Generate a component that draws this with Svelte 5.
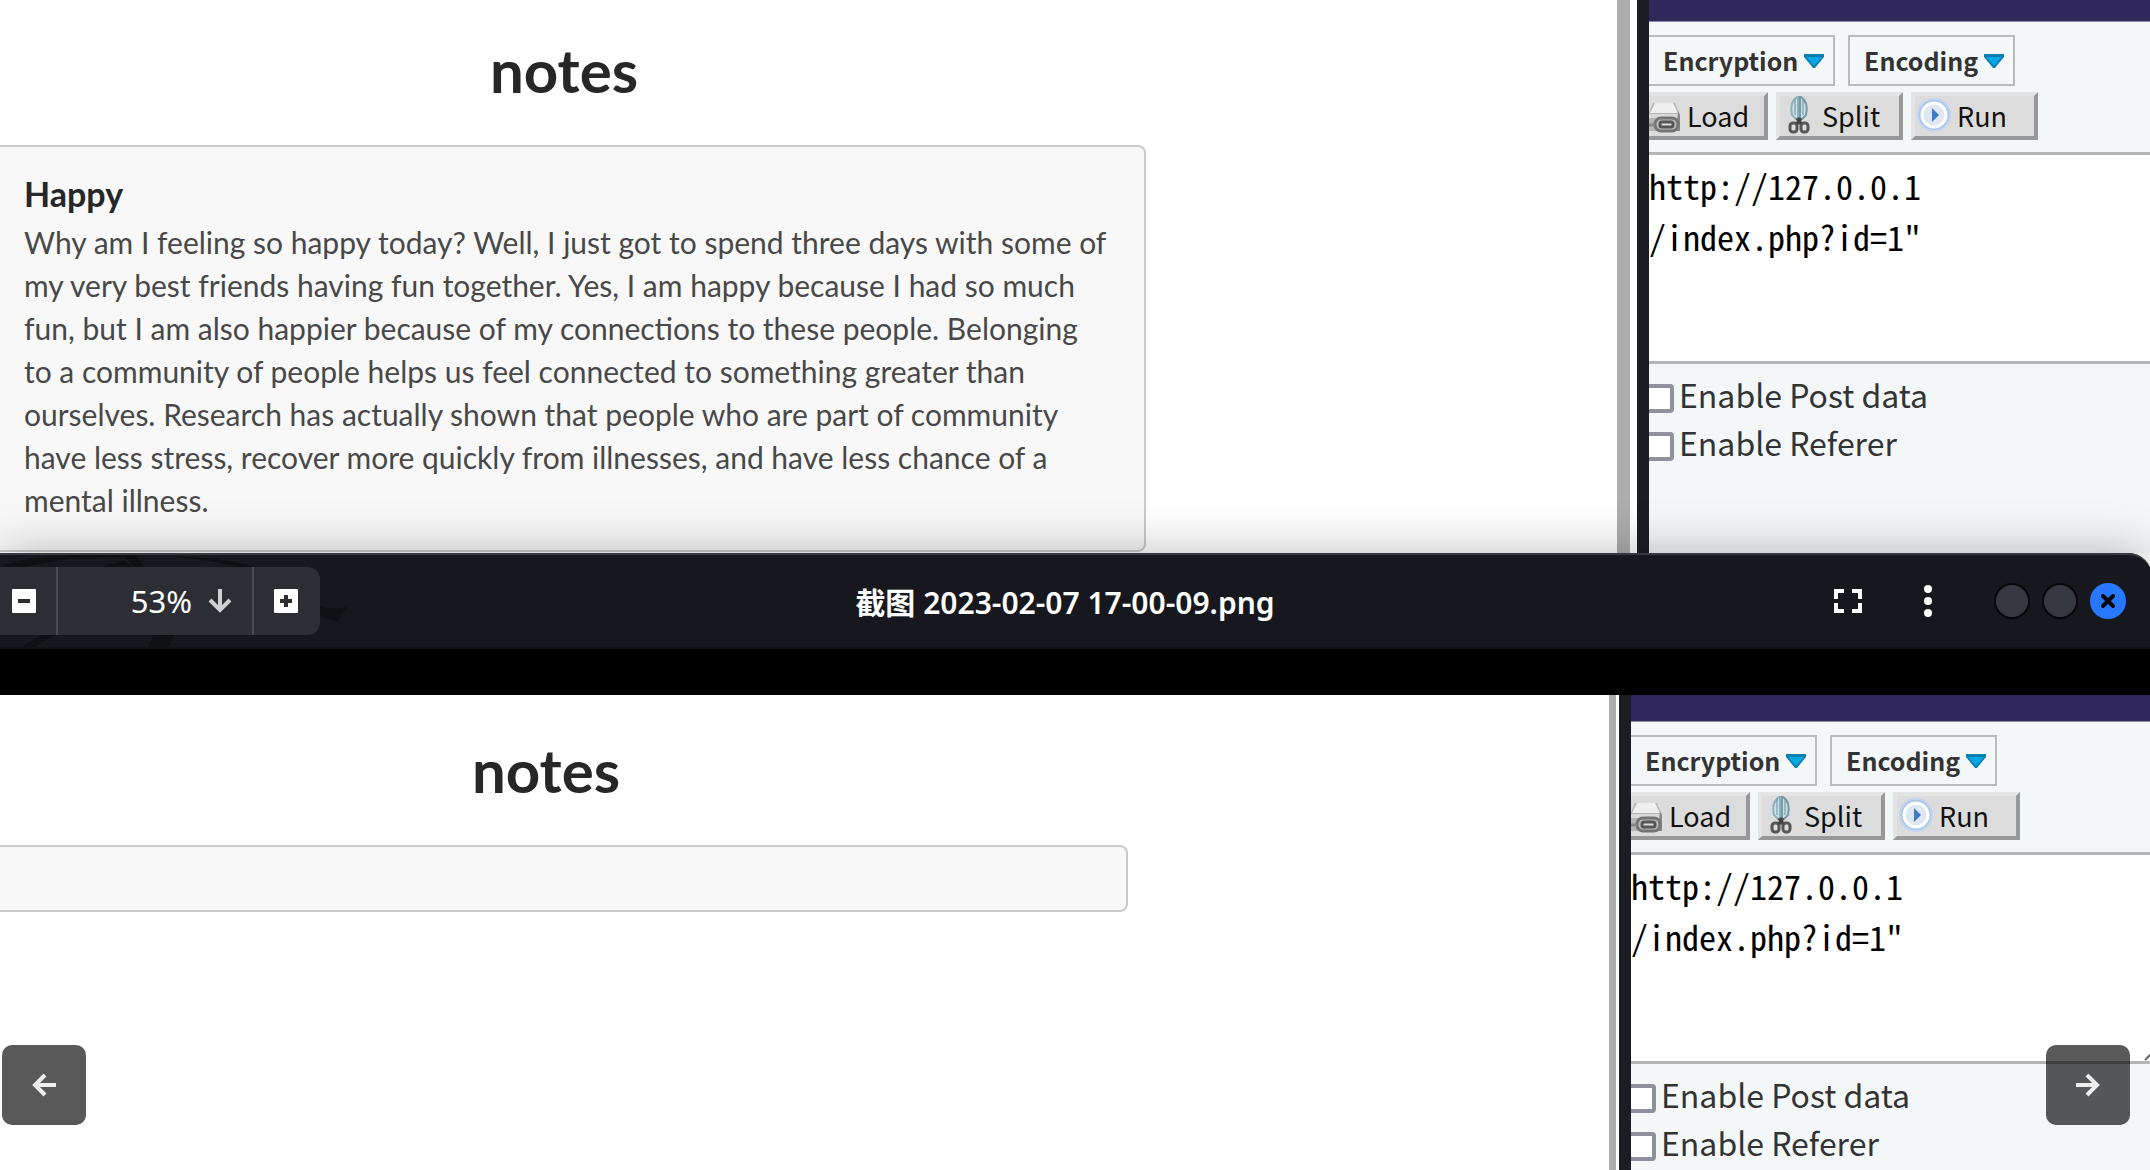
<script lang="ts">
	const title = '截图 2023-02-07 17-00-09.png';
	const windows = [
		{
			id: 'front',
			note: {
				header: 'Happy',
				text: 'Why am I feeling so happy today? Well, I just got to spend three days with some of my very best friends having fun together. Yes, I am happy because I had so much fun, but I am also happier because of my connections to these people. Belonging to a community of people helps us feel connected to something greater than ourselves. Research has actually shown that people who are part of community have less stress, recover more quickly from illnesses, and have less chance of a mental illness.'
			},
			url: 'http://127.0.0.1\n/index.php?id=1"'
		},
		{
			id: 'image',
			note: null,
			url: 'http://127.0.0.1\n/index.php?id=1"'
		}
	];
	const menus = ['Encryption', 'Encoding'];
	const options = ['Enable Post data', 'Enable Referer'];
</script>

{#snippet browser(win: (typeof windows)[number])}
	<div class="window {win.id}">
		<main>
			<h1>notes</h1>
			<div class="message">
				{#if win.note}
					<h2>{win.note.header}</h2>
					<p>{win.note.text}</p>
				{/if}
			</div>
		</main>
		<div class="scrollbar"></div>
		<aside>
			<div class="titlebar"></div>
			<div class="menus">
				{#each menus as menu}
					<div class="menu">
						<select aria-label={menu}>
							<option>{menu}</option>
						</select>
						<svg width="22" height="16" viewBox="0 0 22 16">
							<path d="M1 1h20v3L12 15h-2L1 4z" fill="#0d7fae" />
							<path d="M3 4h16l-8 9z" fill="#06a5e3" />
						</svg>
					</div>
				{/each}
			</div>
			<div class="actions">
				<button>
					<svg width="34" height="38" viewBox="0 0 34 38">
						<path d="M6 7h22l5 12v16H1V19z" fill="#b4b4b4" />
						<path d="M8 7h18l5 10H3z" fill="#efefef" />
						<path d="M2 18h29v4H2z" fill="#dadada" />
						<path d="M31 15l2 4v16h-4z" fill="#868686" />
						<rect x="8" y="22" width="23" height="13" rx="6" fill="#bbb" stroke="#747474" stroke-width="3" />
						<rect x="13" y="26" width="13" height="5" rx="2" fill="#ddd" stroke="#555" stroke-width="3" />
						<path d="M0 29h8" stroke="#888" stroke-width="3" />
					</svg>
					Load
				</button>
				<button>
					<svg width="34" height="38" viewBox="0 0 34 38">
						<path d="M15 1c-5 3-7 10-5 18l4 4h2V1z" fill="#c9e3ea" stroke="#8db0ba" stroke-width="2" />
						<path d="M19 1c5 3 7 10 5 18l-4 4h-2V1z" fill="#c9e3ea" stroke="#7699a4" stroke-width="2" />
						<path d="M13 3v16M21 3v16" stroke="#6c8d98" />
						<path d="M15 22l2 4 2-4" fill="none" stroke="#555" stroke-width="3" />
						<rect x="8" y="27" width="7" height="9" rx="3" fill="#ddd" stroke="#555" stroke-width="3" />
						<rect x="19" y="27" width="7" height="9" rx="3" fill="#ddd" stroke="#555" stroke-width="3" />
						<path d="M15 28l2-4 2 4" fill="none" stroke="#444" stroke-width="3" />
					</svg>
					Split
				</button>
				<button>
					<svg width="34" height="38" viewBox="0 0 34 38">
						<circle cx="17" cy="19" r="16" fill="#a9c4e8" stroke="#c3d5ee" stroke-width="2" />
						<circle cx="17" cy="19" r="12" fill="#dfe7f3" stroke="#fff" stroke-width="3" />
						<path d="M15 12l7 7-7 7z" fill="#3f7ac4" />
					</svg>
					Run
				</button>
			</div>
			<div class="url">
				<textarea aria-label="URL" rows="4" spellcheck="false" value={win.url}></textarea>
				<svg class="grip" width="14" height="14" viewBox="0 0 14 14">
					<path d="M1 13L13 1M7 13l6-6" stroke="#666" stroke-width="2" />
				</svg>
			</div>
			<div class="options">
				{#each options as option}
					<label>
						<input type="checkbox" />
						<span>{option}</span>
					</label>
				{/each}
			</div>
		</aside>
	</div>
{/snippet}

<div class="desktop">
	{@render browser(windows[0])}

	<section class="viewer">
		<header>
			<!-- watermark behind the toolbar -->
			<svg class="dragon" width="360" height="94" viewBox="0 0 360 94">
				<path d="M0 10Q50-4 135 0l9 12h-12l-7-9Q60 0 0 18z" />
				<path d="M100 12l23-6 8 6zM174 2q50 0 86 11h-20Q210 4 174 2zM320 51q15 6 31 2l-10 16q-10-5-21-7z" />
				<path d="M19 94l24-16h14L32 94zM148 94l6-16h22l-8 16z" />
			</svg>
			<div class="zoom">
				<button aria-label="Zoom out">
					<svg width="24" height="24" viewBox="0 0 24 24">
						<rect width="24" height="24" rx="1" fill="#fff" />
						<path d="M6 12h12" stroke="#2d2e33" stroke-width="4" />
					</svg>
				</button>
				<button class="level">
					53%
					<svg width="24" height="24" viewBox="0 0 24 24">
						<path d="M12 0v21M2 11l10 10 10-10" fill="none" stroke="#d0d1d2" stroke-width="4" />
					</svg>
				</button>
				<button aria-label="Zoom in">
					<svg width="24" height="24" viewBox="0 0 24 24">
						<rect width="24" height="24" rx="1" fill="#fff" />
						<path d="M6 12h12M12 6v12" stroke="#2d2e33" stroke-width="4" />
					</svg>
				</button>
			</div>
			<h3>{title}</h3>
			<div class="tools">
				<button aria-label="Fullscreen">
					<svg width="28" height="24" viewBox="0 0 28 24">
						<path d="M2 10V2h8M18 2h8v8M26 14v8h-8M10 22H2v-8" fill="none" stroke="#fff" stroke-width="4" />
					</svg>
				</button>
				<button aria-label="Menu">
					<svg width="8" height="32" viewBox="0 0 8 32" fill="#fff">
						<circle cx="4" cy="4" r="4" />
						<circle cx="4" cy="16" r="4" />
						<circle cx="4" cy="28" r="4" />
					</svg>
				</button>
				<div class="controls">
					<button class="control" aria-label="Minimize"></button>
					<button class="control" aria-label="Maximize"></button>
					<button class="control close" aria-label="Close">
						<svg width="14" height="14" viewBox="0 0 14 14">
							<path d="M2 2l10 10M12 2L2 12" stroke="#0a0a0c" stroke-width="4" stroke-linecap="round" />
						</svg>
					</button>
				</div>
			</div>
		</header>
		<div class="picture">
			{@render browser(windows[1])}
			<button class="nav previous" aria-label="Previous">
				<svg width="24" height="24" viewBox="0 0 24 24">
					<path d="M24 12H3M13 2L3 12l10 10" fill="none" stroke="#eee" stroke-width="4" />
				</svg>
			</button>
			<button class="nav next" aria-label="Next">
				<svg width="24" height="24" viewBox="0 0 24 24">
					<path d="M0 12h21M11 2l10 10-10 10" fill="none" stroke="#eee" stroke-width="4" />
				</svg>
			</button>
		</div>
	</section>
</div>

<style>
	:global(body) {
		margin: 0;
		overflow: hidden;
	}

	* {
		box-sizing: border-box;
	}

	svg {
		display: block;
		flex: none;
	}

	button {
		border: none;
		padding: 0;
		margin: 0;
		background: transparent;
		cursor: pointer;
	}

	.desktop {
		display: flex;
		flex-direction: column;
		height: 100vh;
		overflow: hidden;
		background: white;
	}

	.window {
		display: flex;
		background: white;
	}

	main {
		flex: 1;
		min-width: 0;
		color: #272727;
		font-family: Lato, sans-serif;
	}

	h1 {
		width: 1164px;
		margin: 0 0 0 -18px;
		padding: 32px 0 37px;
		font-size: 60px;
		line-height: 76px;
		text-align: center;
	}

	.message {
		width: 1164px;
		min-height: 67px;
		margin: 0 0 1px -18px;
		padding: 26px 36px 28px 40px;
		border: 2px solid #c9cacb;
		border-radius: 8px;
		background: #f8f8f9;
	}

	h2 {
		margin: 0 0 6px;
		font-size: 34px;
		line-height: 42px;
	}

	p {
		margin: 0;
		color: #484848;
		font-size: 30px;
		line-height: 43px;
	}

	.scrollbar {
		flex: none;
		width: 20px;
		border-right: 7px solid white;
		background: #adadad;
	}

	aside {
		flex: none;
		width: 513px;
		overflow: hidden;
		border-left: 12px solid #1c1d22;
		background: #f3f7f8;
		color: #333;
		font-family: 'Noto Sans CJK SC', sans-serif;
	}

	.titlebar {
		height: 22px;
		border-bottom: 1px solid #8d88ae;
		background: #30285b;
	}

	.menus {
		display: flex;
		gap: 13px;
		margin: 13px 0 6px -2px;
	}

	.menu {
		display: flex;
		align-items: center;
		gap: 4px;
		height: 51px;
		padding: 0 8px 0 14px;
		border: 2px solid #bbb;
	}

	select {
		appearance: none;
		border: none;
		padding: 0 0 2px;
		background: transparent;
		color: #333;
		font: bold 25px 'Noto Sans CJK SC', sans-serif;
	}

	.actions {
		display: flex;
		gap: 8px;
		margin: 0 0 12px -8px;
	}

	.actions button {
		display: flex;
		align-items: center;
		gap: 6px;
		width: 127px;
		height: 48px;
		border: 4px solid;
		border-color: #e4e4e4 #989898 #989898 #e4e4e4;
		padding: 0 0 2px 2px;
		background: #dcdcdc;
		color: #111;
		font: 27px 'Noto Sans CJK SC', sans-serif;
	}

	.url {
		position: relative;
		width: 527px;
		border-top: 3px solid #b5b5b5;
		border-bottom: 3px solid #b5b5b5;
	}

	textarea {
		display: block;
		width: 100%;
		height: 206px;
		border: none;
		padding: 5px 0 0;
		background: white;
		color: black;
		font-family: 'Noto Sans Mono CJK SC', 'Noto Sans CJK SC', monospace;
		font-feature-settings: 'hwid';
		font-size: 34px;
		line-height: 51px;
		resize: none;
		outline: none;
		overflow: hidden;
	}

	.grip {
		position: absolute;
		right: 0;
		bottom: 0;
	}

	.options {
		padding-top: 10px;
	}

	label {
		display: flex;
		align-items: center;
		gap: 5px;
		height: 48px;
		font-size: 32px;
		line-height: 40px;
	}

	label span {
		padding-bottom: 8px;
	}

	input {
		appearance: none;
		flex: none;
		width: 29px;
		height: 29px;
		margin: 0 0 0 -4px;
		border: 4px solid #8f8f9d;
		border-radius: 4px;
		background: white;
	}

	.viewer {
		position: relative;
		display: flex;
		flex: 1;
		flex-direction: column;
		min-height: 0;
		margin-right: -2px;
		border-radius: 0 24px 0 0;
		background: black;
		box-shadow: 0 0 50px rgba(0, 0, 0, 0.27);
	}

	header {
		position: relative;
		display: grid;
		grid-template-columns: 1fr auto 1fr;
		align-items: center;
		height: 96px;
		border-top: 2px solid #38393e;
		border-bottom: 2px solid #111216;
		border-radius: 0 24px 0 0;
		background: #17181d;
	}

	.dragon {
		position: absolute;
		left: 0;
		top: 0;
		height: 92px;
		fill: #0f1013;
	}

	.zoom {
		position: relative;
		display: flex;
		justify-self: start;
		height: 68px;
		overflow: hidden;
		border-radius: 0 12px 12px 0;
		background: #2d2e33;
	}

	.zoom button {
		display: flex;
		align-items: center;
		padding: 0 20px;
	}

	.zoom button:first-child {
		padding-left: 12px;
	}

	.zoom button:last-child {
		padding-right: 22px;
	}

	.zoom .level {
		gap: 16px;
		justify-content: flex-end;
		width: 198px;
		border: solid #4b4c50;
		border-width: 0 2px;
		color: white;
		font: 31px 'Noto Sans', sans-serif;
	}

	h3 {
		margin: 0 22px 0 0;
		color: white;
		font: 600 30px 'Noto Sans', 'Noto Sans CJK SC', sans-serif;
	}

	.tools {
		display: flex;
		align-items: center;
		justify-self: end;
		gap: 62px;
		padding-right: 26px;
	}

	.controls {
		display: flex;
		gap: 12px;
	}

	.control {
		display: flex;
		align-items: center;
		justify-content: center;
		width: 36px;
		height: 36px;
		border: 2px solid #08080a;
		border-radius: 50%;
		background: #363741;
	}

	.close {
		border-color: #2777ff;
		background: #2777ff;
	}

	.picture {
		position: relative;
		flex: 1;
		min-height: 0;
		margin-right: 2px;
		padding-top: 46px;
		overflow: hidden;
	}

	.image {
		height: 100%;
		margin-left: -18px;
	}

	.image h1 {
		padding-top: 37px;
	}

	.image .titlebar {
		height: 27px;
	}

	.image .scrollbar {
		width: 10px;
		border-right-width: 3px;
	}

	.image aside {
		width: 531px;
	}

	.nav {
		position: absolute;
		bottom: 45px;
		display: flex;
		align-items: center;
		justify-content: center;
		width: 84px;
		height: 80px;
		border-radius: 10px;
		background: rgba(0, 0, 0, 0.65);
	}

	.previous {
		left: 2px;
	}

	.next {
		right: 20px;
	}
</style>
